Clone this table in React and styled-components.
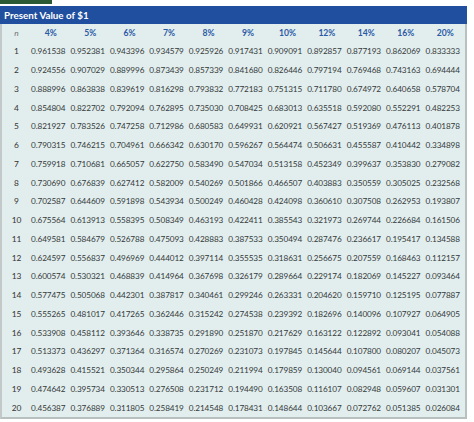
import React from 'react';
import styled, { createGlobalStyle } from 'styled-components';

const GlobalStyle = createGlobalStyle`
  html, body {
    margin: 0;
    padding: 0;
    background: #ffffff;
  }
  body {
    font-family: Lato, "Open Sans", sans-serif;
  }
`;

const rates = ['4%', '5%', '6%', '7%', '8%', '9%', '10%', '12%', '14%', '16%', '20%'];

const data = [
  ['0.961538', '0.952381', '0.943396', '0.934579', '0.925926', '0.917431', '0.909091', '0.892857', '0.877193', '0.862069', '0.833333'],
  ['0.924556', '0.907029', '0.889996', '0.873439', '0.857339', '0.841680', '0.826446', '0.797194', '0.769468', '0.743163', '0.694444'],
  ['0.888996', '0.863838', '0.839619', '0.816298', '0.793832', '0.772183', '0.751315', '0.711780', '0.674972', '0.640658', '0.578704'],
  ['0.854804', '0.822702', '0.792094', '0.762895', '0.735030', '0.708425', '0.683013', '0.635518', '0.592080', '0.552291', '0.482253'],
  ['0.821927', '0.783526', '0.747258', '0.712986', '0.680583', '0.649931', '0.620921', '0.567427', '0.519369', '0.476113', '0.401878'],
  ['0.790315', '0.746215', '0.704961', '0.666342', '0.630170', '0.596267', '0.564474', '0.506631', '0.455587', '0.410442', '0.334898'],
  ['0.759918', '0.710681', '0.665057', '0.622750', '0.583490', '0.547034', '0.513158', '0.452349', '0.399637', '0.353830', '0.279082'],
  ['0.730690', '0.676839', '0.627412', '0.582009', '0.540269', '0.501866', '0.466507', '0.403883', '0.350559', '0.305025', '0.232568'],
  ['0.702587', '0.644609', '0.591898', '0.543934', '0.500249', '0.460428', '0.424098', '0.360610', '0.307508', '0.262953', '0.193807'],
  ['0.675564', '0.613913', '0.558395', '0.508349', '0.463193', '0.422411', '0.385543', '0.321973', '0.269744', '0.226684', '0.161506'],
  ['0.649581', '0.584679', '0.526788', '0.475093', '0.428883', '0.387533', '0.350494', '0.287476', '0.236617', '0.195417', '0.134588'],
  ['0.624597', '0.556837', '0.496969', '0.444012', '0.397114', '0.355535', '0.318631', '0.256675', '0.207559', '0.168463', '0.112157'],
  ['0.600574', '0.530321', '0.468839', '0.414964', '0.367698', '0.326179', '0.289664', '0.229174', '0.182069', '0.145227', '0.093464'],
  ['0.577475', '0.505068', '0.442301', '0.387817', '0.340461', '0.299246', '0.263331', '0.204620', '0.159710', '0.125195', '0.077887'],
  ['0.555265', '0.481017', '0.417265', '0.362446', '0.315242', '0.274538', '0.239392', '0.182696', '0.140096', '0.107927', '0.064905'],
  ['0.533908', '0.458112', '0.393646', '0.338735', '0.291890', '0.251870', '0.217629', '0.163122', '0.122892', '0.093041', '0.054088'],
  ['0.513373', '0.436297', '0.371364', '0.316574', '0.270269', '0.231073', '0.197845', '0.145644', '0.107800', '0.080207', '0.045073'],
  ['0.493628', '0.415521', '0.350344', '0.295864', '0.250249', '0.211994', '0.179859', '0.130040', '0.094561', '0.069144', '0.037561'],
  ['0.474642', '0.395734', '0.330513', '0.276508', '0.231712', '0.194490', '0.163508', '0.116107', '0.082948', '0.059607', '0.031301'],
  ['0.456387', '0.376889', '0.311805', '0.258419', '0.214548', '0.178431', '0.148644', '0.103667', '0.072762', '0.051385', '0.026084'],
];

const Page = styled.div`
  width: 467px;
`;

const Tab = styled.div`
  width: 52px;
  height: 4px;
  background: #2c5a32;
  margin-bottom: 2px;
`;

const Table = styled.div`
  background: #e2eded;
  border-left: 2px solid #c3c9c9;
  border-right: 2px solid #b9c0c0;
  border-bottom: 2px solid #b9c0c0;
`;

const Title = styled.div`
  height: 18px;
  background: #1f4f9e;
  color: #ffffff;
  font-weight: 700;
  font-size: 9.8px;
  line-height: 18px;
  padding-left: 4px;
  margin-left: -2px;
  margin-right: -2px;
`;

const Row = styled.div`
  display: grid;
  grid-template-columns: 29px repeat(11, 1fr);
  height: ${(p) => p.$h}px;
  align-items: center;
`;

const NCell = styled.div`
  text-align: center;
  font-size: 8.4px;
  color: ${(p) => (p.$head ? '#6d7474' : '#333')};
  font-style: ${(p) => (p.$head ? 'italic' : 'normal')};
`;

const RateCell = styled.div`
  text-align: center;
  font-size: 8.6px;
  font-weight: 700;
  color: #2b5aa6;
`;

const Cell = styled.div`
  font-size: 8.2px;
  letter-spacing: -0.1px;
  color: #333a3a;
  white-space: nowrap;
`;

export default function App() {
  return (
    <Page>
      <GlobalStyle />
      <Tab />
      <Table>
        <Title>Present Value of $1</Title>
        <Row $h={18}>
          <NCell $head>n</NCell>
          {rates.map((r) => (
            <RateCell key={r}>{r}</RateCell>
          ))}
        </Row>
        {data.map((row, i) => (
          <Row key={i} $h={18.75}>
            <NCell>{i + 1}</NCell>
            {row.map((v, j) => (
              <Cell key={j}>{v}</Cell>
            ))}
          </Row>
        ))}
      </Table>
    </Page>
  );
}
